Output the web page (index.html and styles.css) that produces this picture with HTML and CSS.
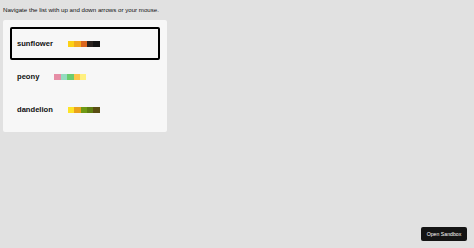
FILE: index.html
```html
<!DOCTYPE html>
<html>
<head>
<meta charset="utf-8">
<link rel="stylesheet" href="styles.css">
</head>
<body>
<p class="hint">Navigate the list with up and down arrows or your mouse.</p>
<ul class="list">
  <li class="item selected">
    <span class="name">sunflower</span>
    <span class="swatches">
      <i class="sw" style="background:#fcd116"></i><i class="sw" style="background:#f2a81d"></i><i class="sw" style="background:#d9661f"></i><i class="sw" style="background:#2a2320"></i><i class="sw" style="background:#141414"></i>
    </span>
  </li>
  <li class="item">
    <span class="name">peony</span>
    <span class="swatches">
      <i class="sw" style="background:#e68ea6"></i><i class="sw" style="background:#95dcc0"></i><i class="sw" style="background:#6ccc6e"></i><i class="sw" style="background:#fcc64a"></i><i class="sw" style="background:#fff080"></i>
    </span>
  </li>
  <li class="item">
    <span class="name">dandelion</span>
    <span class="swatches">
      <i class="sw" style="background:#fde428"></i><i class="sw" style="background:#eaa21d"></i><i class="sw" style="background:#6f9a14"></i><i class="sw" style="background:#5f7e12"></i><i class="sw" style="background:#5a4e12"></i>
    </span>
  </li>
</ul>
<button class="sandbox">Open Sandbox</button>
</body>
</html>
```
FILE: styles.css
```css
html, body {
  margin: 0;
  padding: 0;
  background: #e1e1e1;
  height: 100%;
}
body {
  font-family: "Liberation Sans", Arial, sans-serif;
  padding: 0 3px;
  box-sizing: border-box;
}
.hint {
  margin: 0;
  padding-top: 6px;
  font-size: 6.15px;
  line-height: 8px;
  color: #111;
}
.list {
  list-style: none;
  margin: 6px 0 0 0;
  padding: 7px 7px 6px 7px;
  width: 164px;
  box-sizing: border-box;
  background: #f7f7f7;
  border-radius: 2px;
}
.item {
  height: 33px;
  box-sizing: border-box;
  display: flex;
  align-items: center;
  gap: 15px;
  padding: 0 7px;
  border: 2px solid transparent;
  border-radius: 2px;
}
.item.selected {
  border-color: #000;
}
.name {
  font-weight: bold;
  font-size: 7.6px;
  color: #111;
  margin-left: -2px;
}
.swatches {
  display: flex;
}
.sw {
  display: block;
  width: 6.4px;
  height: 6px;
}
.sandbox {
  position: fixed;
  right: 7px;
  bottom: 7px;
  background: #141414;
  color: #fff;
  border: none;
  border-radius: 2px;
  font-family: "Liberation Sans", Arial, sans-serif;
  font-size: 5.2px;
  height: 14px;
  width: 46px;
  padding: 0;
}
```
